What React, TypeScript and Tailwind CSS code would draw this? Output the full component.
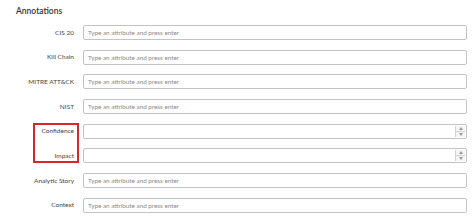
import React from 'react';

const rows: { label: string; kind: 'text' | 'number' }[] = [
  { label: 'CIS 20', kind: 'text' },
  { label: 'Kill Chain', kind: 'text' },
  { label: 'MITRE ATT&CK', kind: 'text' },
  { label: 'NIST', kind: 'text' },
  { label: 'Confidence', kind: 'number' },
  { label: 'Impact', kind: 'number' },
  { label: 'Analytic Story', kind: 'text' },
  { label: 'Context', kind: 'text' },
];

const Spinner = () => (
  <div className="absolute right-[1px] top-[1px] bottom-[1px] flex w-[10px] flex-col border-l border-[#d3d3d3]">
    <div className="flex flex-1 items-center justify-center border-b border-[#d3d3d3] bg-[#f4f4f4]">
      <svg width="4" height="3" viewBox="0 0 4 3">
        <path d="M0 3 L2 0 L4 3 Z" fill="#9a9a9a" />
      </svg>
    </div>
    <div className="flex flex-1 items-center justify-center bg-[#f4f4f4]">
      <svg width="4" height="3" viewBox="0 0 4 3">
        <path d="M0 0 L2 3 L4 0 Z" fill="#9a9a9a" />
      </svg>
    </div>
  </div>
);

export default function App() {
  return (
    <div
      className="relative h-[219px] w-[474px] overflow-hidden bg-white text-[#3c444d]"
      style={{ fontFamily: 'Lato, "Open Sans", sans-serif' }}
    >
      <h3 className="pl-[16px] pt-[5px] text-[8.5px] font-semibold leading-[12px] text-[#333]">Annotations</h3>

      <div className="mt-[8px] flex flex-col gap-[9.7px]">
        {rows.map((row) => (
          <div key={row.label} className="flex h-[15px] items-center">
            <label className="w-[74px] whitespace-nowrap text-right text-[6.5px] text-[#444]">{row.label}</label>
            <div className="relative ml-[9px] h-[15px] w-[384px] rounded-[2px] border border-[#c3c3c3] bg-white">
              {row.kind === 'text' ? (
                <span className="absolute left-[4px] top-0 text-[6.3px] leading-[13px] text-[#8a8a8a]">
                  Type an attribute and press enter
                </span>
              ) : (
                <Spinner />
              )}
            </div>
          </div>
        ))}
      </div>

      <div className="absolute left-[33px] top-[123px] h-[40px] w-[46px] border-2 border-[#d9262b]" />
    </div>
  );
}
